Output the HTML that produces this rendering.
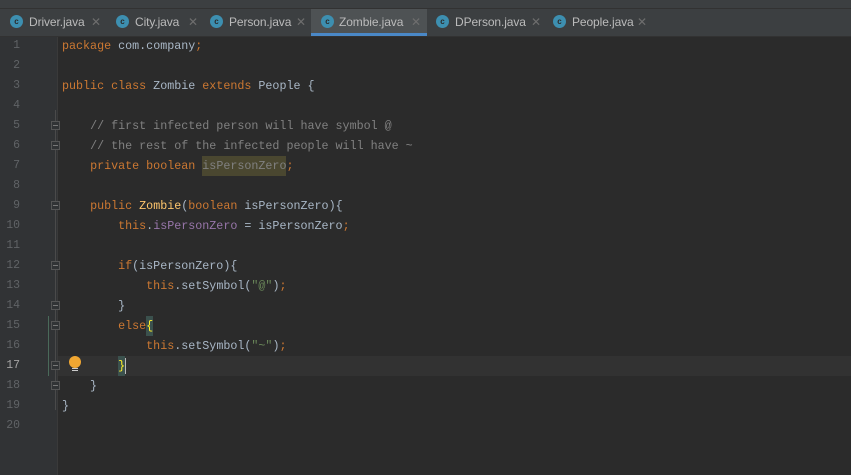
<!DOCTYPE html><html><head><style>
body{margin:0;width:851px;height:475px;background:#2b2b2b;overflow:hidden;font-family:"Liberation Sans",sans-serif;position:relative}
#top{position:absolute;left:0;top:0;width:851px;height:8px;background:#3c3f41;border-bottom:1px solid #323232}
#tabs{position:absolute;left:0;top:9px;width:851px;height:27px;background:#3c3f41;border-bottom:1px solid #323232}
.tab{position:absolute;top:0;height:27px;font-size:12px;color:#bbbbbb;line-height:26px;letter-spacing:-0.1px}
.tab .ic{position:absolute;top:6px;width:13px;height:13px;border-radius:50%;background:#3d8fb0;color:#2b2b2b;font-size:8px;line-height:13px;text-align:center;font-weight:bold;letter-spacing:0}
.tab .x{position:absolute;top:0;color:#6e6e6e;font-size:12px}
#gut{position:absolute;left:0;top:37px;width:57px;height:438px;background:#313335;border-right:1px solid #3a3a3a}
.ln{position:absolute;left:0;width:20px;text-align:right;font-family:"Liberation Mono",monospace;font-size:11.5px;color:#606366;line-height:20px}
.code{position:absolute;left:62px;font-family:"Liberation Mono",monospace;font-size:11.7px;line-height:20px;color:#a9b7c6;white-space:pre}
.k{color:#cc7832}.c{color:#808080}.f{color:#9876aa}.m{color:#ffc66d}.s{color:#6a8759}
.fold{position:absolute;left:51px;width:9px;height:9px;border:1px solid #555;box-sizing:border-box;background:#313335}
.fold:after{content:"";position:absolute;left:1px;top:3px;width:5px;height:1px;background:#777}
</style></head><body>
<div id="top"></div>
<div id="tabs">
<div class="tab" style="left:10px;width:98px"><span class="ic" style="left:0">c</span><span style="position:absolute;left:19px">Driver.java</span><span class="x" style="left:81px">✕</span></div>
<div class="tab" style="left:116px;width:90px"><span class="ic" style="left:0">c</span><span style="position:absolute;left:19px">City.java</span><span class="x" style="left:72px">✕</span></div>
<div class="tab" style="left:210px;width:100px"><span class="ic" style="left:0">c</span><span style="position:absolute;left:19px">Person.java</span><span class="x" style="left:86px">✕</span></div>
<div class="tab" style="left:311px;width:116px;background:#4e5254;border-bottom:3px solid #4a88c7;height:24px"><span class="ic" style="left:10px">c</span><span style="position:absolute;left:28px">Zombie.java</span><span class="x" style="left:100px">✕</span></div>
<div class="tab" style="left:436px;width:110px"><span class="ic" style="left:0">c</span><span style="position:absolute;left:19px">DPerson.java</span><span class="x" style="left:95px">✕</span></div>
<div class="tab" style="left:553px;width:100px"><span class="ic" style="left:0">c</span><span style="position:absolute;left:19px">People.java</span><span class="x" style="left:84px">✕</span></div>
</div>
<div style="position:absolute;left:58px;top:356px;width:793px;height:20px;background:#323232"></div>
<div id="gut"></div>
<div style="position:absolute;left:0;top:356px;width:57px;height:20px;background:#313335"></div>
<div style="position:absolute;left:48px;top:316px;width:1px;height:60px;background:#4a6a5a"></div>
<div style="position:absolute;left:55px;top:110px;width:1px;height:300px;background:#4a4a4a"></div>
<div style="position:absolute;left:69px;top:356px;width:12px;height:12px;border-radius:50%;background:#f0a732"></div>
<div style="position:absolute;left:72px;top:368px;width:6px;height:1px;background:#ccc"></div>
<div style="position:absolute;left:72px;top:370px;width:6px;height:1px;background:#ccc"></div>
<div class="ln" style="top:36px">1</div><div class="ln" style="top:56px">2</div><div class="ln" style="top:76px">3</div><div class="ln" style="top:96px">4</div><div class="ln" style="top:116px">5</div><div class="ln" style="top:136px">6</div><div class="ln" style="top:156px">7</div><div class="ln" style="top:176px">8</div><div class="ln" style="top:196px">9</div><div class="ln" style="top:216px">10</div><div class="ln" style="top:236px">11</div><div class="ln" style="top:256px">12</div><div class="ln" style="top:276px">13</div><div class="ln" style="top:296px">14</div><div class="ln" style="top:316px">15</div><div class="ln" style="top:336px">16</div><div class="ln" style="top:356px;color:#a4a3a3">17</div><div class="ln" style="top:376px">18</div><div class="ln" style="top:396px">19</div><div class="ln" style="top:416px">20</div>
<div class="fold" style="top:121px"></div><div class="fold" style="top:141px"></div><div class="fold" style="top:201px"></div><div class="fold" style="top:261px"></div><div class="fold" style="top:301px"></div><div class="fold" style="top:321px"></div><div class="fold" style="top:361px"></div><div class="fold" style="top:381px"></div>
<div style="position:absolute;left:202px;top:156px;width:84px;height:20px;background:#4a4730"></div>
<div style="position:absolute;left:146px;top:316px;width:7px;height:20px;background:#3b514d"></div>
<div style="position:absolute;left:118px;top:356px;width:7px;height:20px;background:#3b514d"></div>
<div class="code" style="top:36px"><span class="k">package</span> com.company<span class="k">;</span>

<span class="k">public class</span> Zombie <span class="k">extends</span> People {

    <span class="c">// first infected person will have symbol @</span>
    <span class="c">// the rest of the infected people will have ~</span>
    <span class="k">private boolean</span> <span style="color:#808080">isPersonZero</span><span class="k">;</span>

    <span class="k">public</span> <span class="m">Zombie</span>(<span class="k">boolean</span> isPersonZero){
        <span class="k">this</span>.<span class="f">isPersonZero</span> = isPersonZero<span class="k">;</span>

        <span class="k">if</span>(isPersonZero){
            <span class="k">this</span>.setSymbol(<span class="s">"@"</span>)<span class="k">;</span>
        }
        <span class="k">else</span><span style="color:#ffef28">{</span>
            <span class="k">this</span>.setSymbol(<span class="s">"~"</span>)<span class="k">;</span>
        <span style="color:#ffef28">}</span>
    }
}
</div>
<div style="position:absolute;left:125px;top:358px;width:1px;height:16px;background:#bbb"></div>
</body></html>
